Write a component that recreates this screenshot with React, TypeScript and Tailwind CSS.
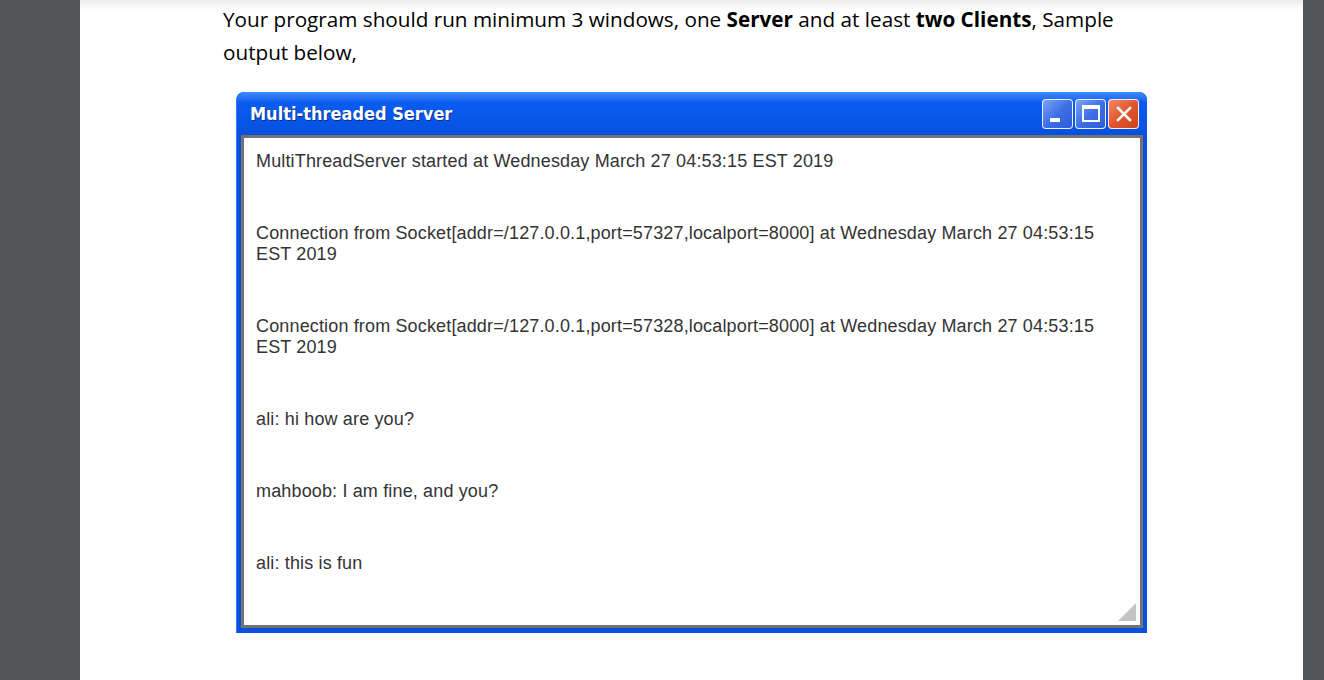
import { Fragment } from "react";

const lines: string[][] = [
  ["MultiThreadServer started at Wednesday March 27 04:53:15 EST 2019"],
  [
    "Connection from Socket[addr=/127.0.0.1,port=57327,localport=8000] at Wednesday March 27 04:53:15",
    "EST 2019",
  ],
  [
    "Connection from Socket[addr=/127.0.0.1,port=57328,localport=8000] at Wednesday March 27 04:53:15",
    "EST 2019",
  ],
  ["ali: hi how are you?"],
  ["mahboob: I am fine, and you?"],
  ["ali: this is fun"],
];

function TitleButton({ kind }: { kind: "min" | "max" | "close" }) {
  const bg =
    kind === "close"
      ? "bg-gradient-to-br from-[#f08a65] via-[#e1542a] to-[#c9431c]"
      : "bg-gradient-to-br from-[#7ea4f5] via-[#3f6fe6] to-[#2d5bd8]";
  return (
    <div
      className={`flex h-[30px] w-[31px] items-center justify-center rounded-[4px] border border-white/90 ${bg}`}
    >
      {kind === "min" && <div className="mr-[6px] mt-[12px] h-[4px] w-[10px] bg-white" />}
      {kind === "max" && (
        <div className="h-[17px] w-[18px] border-2 border-t-[4px] border-white" />
      )}
      {kind === "close" && (
        <svg width="18" height="18" viewBox="0 0 18 18">
          <path d="M3 3 L15 15 M15 3 L3 15" stroke="white" strokeWidth="2.6" strokeLinecap="square" />
        </svg>
      )}
    </div>
  );
}

export default function App() {
  return (
    <div className="flex h-[680px] w-[1324px] overflow-hidden bg-[#525659]">
      <div className="ml-[80px] h-full w-[1223px] bg-gradient-to-b from-[#ececec] via-white via-[1.5%] to-white pl-[143px] pt-[3px]">
        <p
          className="w-[980px] text-[20.7px] leading-[33px] text-black"
          style={{ fontFamily: "'Open Sans', Lato, sans-serif" }}
        >
          Your program should run minimum 3 windows, one <b>Server</b> and at least{" "}
          <b>two Clients</b>, Sample
          <br />
          output below,
        </p>

        <div className="ml-[13px] mt-[23px] flex h-[541px] w-[911px] flex-col rounded-t-[8px] border-l border-[#3a7cf6] bg-[#0a4fe0]">
          <div className="flex h-[44px] items-center rounded-t-[8px] bg-gradient-to-b from-[#3e8bff] via-[#0a5cf0] via-[25%] to-[#0650e0] pl-[13px] pr-[8px]">
            <span
              className="text-[18px] font-bold text-white [text-shadow:1px_1px_0_#0b2f8a]"
              style={{ fontFamily: "'DejaVu Sans Condensed', 'Liberation Sans', sans-serif" }}
            >
              Multi-threaded Server
            </span>
            <div className="ml-auto flex gap-[2px]">
              <TitleButton kind="min" />
              <TitleButton kind="max" />
              <TitleButton kind="close" />
            </div>
          </div>
          <div className="relative mx-[4px] mb-[5px] flex-1 border-[3px] border-[#737373] bg-white px-[12px] pt-[13px]">
            <div
              className="text-[18px] leading-[21px] tracking-[0.15px] text-[#333]"
              style={{ fontFamily: "'Liberation Sans', Arial, sans-serif" }}
            >
              {lines.map((para, i) => (
                <div key={i} className="mb-[51px]">
                  {para.map((l, j) => (
                    <Fragment key={j}>
                      <div>{l}</div>
                    </Fragment>
                  ))}
                </div>
              ))}
            </div>
            <svg
              className="absolute bottom-[3px] right-[3px]"
              width="20"
              height="20"
              viewBox="0 0 20 20"
            >
              <path d="M19 1 L19 19 L1 19 Z" fill="#c4c4c4" />
            </svg>
          </div>
        </div>
      </div>
    </div>
  );
}
